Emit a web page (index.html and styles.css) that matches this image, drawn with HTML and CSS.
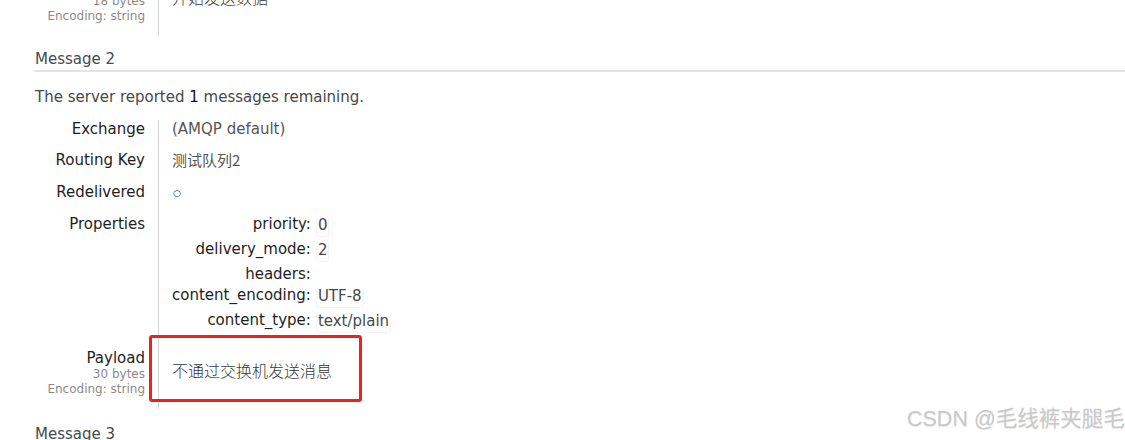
FILE: index.html
```html
<!DOCTYPE html>
<html>
<head>
<meta charset="utf-8">
<link rel="stylesheet" href="styles.css">
</head>
<body>
<div class="page">
  <table class="facts prev">
    <tr>
      <th class="payload-label">Payload<span class="sub">18 bytes</span><span class="sub">Encoding: string</span></th>
      <td class="payload-cell"><div class="payload">开始发送数据</div></td>
    </tr>
  </table>

  <h3 class="msg-title">Message 2</h3>
  <p class="remaining">The server reported <b>1</b> messages remaining.</p>

  <table class="facts">
    <tr><th>Exchange</th><td>(AMQP default)</td></tr>
    <tr><th>Routing Key</th><td class="cjk"><span class="cjk-inner">测试队列2</span></td></tr>
    <tr><th>Redelivered</th><td><span class="circle">○</span></td></tr>
    <tr>
      <th class="props-label">Properties</th>
      <td class="props-cell">
        <table class="props">
          <tr><th>priority:</th><td><span class="val">0</span></td></tr>
          <tr><th>delivery_mode:</th><td><span class="val">2</span></td></tr>
          <tr class="empty"><th>headers:</th><td></td></tr>
          <tr><th>content_encoding:</th><td><span class="val">UTF-8</span></td></tr>
          <tr><th>content_type:</th><td><span class="val">text/plain</span></td></tr>
        </table>
      </td>
    </tr>
    <tr>
      <th class="payload-label">Payload<span class="sub">30 bytes</span><span class="sub">Encoding: string</span></th>
      <td class="payload-cell"><div class="payload">不通过交换机发送消息</div></td>
    </tr>
  </table>

  <h3 class="msg-title next">Message 3</h3>
</div>
<div class="highlight"></div>
<div class="watermark">CSDN @毛线裤夹腿毛</div>
</body>
</html>
```

FILE: styles.css
```css
html, body {
  margin: 0;
  padding: 0;
  background: #ffffff;
}
body {
  width: 1125px;
  height: 440px;
  overflow: hidden;
  position: relative;
  font-family: "DejaVu Sans", "Noto Sans CJK SC", sans-serif;
  font-size: 15px;
  color: #484848;
}
.page {
  padding-left: 34px;
}
.facts {
  border-collapse: collapse;
}
.facts > tbody > tr > th {
  width: 111px;
  text-align: right;
  font-weight: normal;
  color: #1e1e1e;
  vertical-align: top;
  padding: 1px 13px 13.8px 0;
  border-right: 1px solid #d4d4d4;
  line-height: 17px;
  white-space: nowrap;
}
.facts > tbody > tr > td {
  vertical-align: top;
  padding: 1px 0 13.8px 13px;
  line-height: 17px;
  color: #555555;
}
.facts > tbody > tr > th.props-label,
.facts > tbody > tr > td.props-cell {
  padding-bottom: 12px;
}
.cjk {
  font-family: "Noto Sans CJK SC", sans-serif;
  font-size: 15px;
}
.cjk-inner {
  position: relative;
  top: -1px;
}
.circle {
  font-size: 9px;
  line-height: 1;
  color: #333333;
  position: relative;
  top: -1px;
  left: 1px;
}
.prev {
  margin-top: -24px;
}
.payload-label .sub {
  display: block;
  font-size: 12px;
  line-height: 15px;
  color: #8a8a8a;
}
.facts > tbody > tr > th.payload-label {
  padding-bottom: 12px;
}
.facts > tbody > tr > td.payload-cell {
  padding-bottom: 0;
}
.payload-cell .payload {
  font-family: "Noto Sans CJK SC", sans-serif;
  font-size: 16px;
  font-weight: 300;
  color: #3a3a3a;
  padding-top: 12px;
  line-height: 17px;
}
.props {
  border-collapse: collapse;
  margin-top: 0;
}
.props th {
  text-align: right;
  font-weight: normal;
  color: #1e1e1e;
  padding: 0 0 4px 0;
  line-height: 17px;
  vertical-align: top;
  white-space: nowrap;
}
.props td {
  padding: 0 0 4px 5px;
  line-height: 17px;
  vertical-align: top;
  color: #484848;
  white-space: nowrap;
}
.props .val {
  display: inline-block;
  padding: 0 1px 2px 1px;
  border: 1px solid #f3f3f3;
  border-top-color: transparent;
  border-radius: 4px;
}
.msg-title {
  margin: 15px 0 0 0;
  font-size: 15px;
  font-weight: normal;
  color: #444a50;
  line-height: 17px;
  padding: 0 0 2px 1px;
  border-bottom: 2px solid #e4e4e4;
}
.msg-title.next {
  border-bottom: none;
  margin-top: 17px;
}
.remaining {
  margin: 17px 0 13.5px 1px;
  line-height: 17px;
}
.remaining b {
  font-weight: normal;
  color: #111111;
}
.highlight {
  position: absolute;
  left: 149px;
  top: 335px;
  width: 207px;
  height: 61px;
  border: 3px solid #f2201c;
  border-radius: 3px;
}
.watermark {
  position: absolute;
  left: 907px;
  top: 406px;
  font-family: "Liberation Sans", "Noto Sans CJK SC", sans-serif;
  font-size: 21.5px;
  line-height: 26px;
  color: #c9c9c9;
  text-shadow: 0 1px 1px #e8e8e8;
  white-space: nowrap;
}
```
